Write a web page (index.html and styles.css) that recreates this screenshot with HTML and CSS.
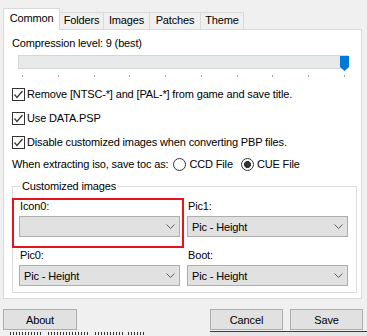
FILE: index.html
```html
<!DOCTYPE html>
<html lang="en">
<head>
  <meta charset="UTF-8">
  <title>Options</title>
  <link rel="stylesheet" href="styles.css">
</head>
<body>
<div class="dialog">
  <div class="tabs">
    <div class="tab active t-common">Common</div>
    <div class="tab t-folders">Folders</div>
    <div class="tab t-images">Images</div>
    <div class="tab t-patches">Patches</div>
    <div class="tab t-theme">Theme</div>
  </div>

  <div class="panel">
    <div class="caption">Compression level: 9 (best)</div>
    <div class="slider">
      <div class="track"></div>
      <svg class="thumb" width="9" height="15" viewBox="0 0 9 15"><path d="M0 0H9V11L4.5 15L0 11Z" fill="#0078d7"/></svg>
      <div class="ticks"><i></i><i></i><i></i><i></i><i></i><i></i><i></i><i></i><i></i><i></i></div>
    </div>

    <div class="check">
      <span class="box"><svg width="11" height="11" viewBox="0 0 11 11"><polyline points="1.5,5.5 4,8.5 9.5,2" fill="none" stroke="#333" stroke-width="1.2"/></svg></span>
      Remove [NTSC-*] and [PAL-*] from game and save title.
    </div>
    <div class="check">
      <span class="box"><svg width="11" height="11" viewBox="0 0 11 11"><polyline points="1.5,5.5 4,8.5 9.5,2" fill="none" stroke="#333" stroke-width="1.2"/></svg></span>
      Use DATA.PSP
    </div>
    <div class="check">
      <span class="box"><svg width="11" height="11" viewBox="0 0 11 11"><polyline points="1.5,5.5 4,8.5 9.5,2" fill="none" stroke="#333" stroke-width="1.2"/></svg></span>
      Disable customized images when converting PBP files.
    </div>

    <div class="radios">
      <span>When extracting iso, save toc as:</span>
      <span class="radio"></span><span>CCD File</span>
      <span class="radio on"></span><span>CUE File</span>
    </div>

    <fieldset class="group">
      <legend>Customized images</legend>
      <div class="grid">
        <div class="field">
          <div class="flabel">Icon0:</div>
          <div class="combo"><span></span><svg width="9" height="5" viewBox="0 0 9 5"><polyline points="0.5,0.5 4.5,4.5 8.5,0.5" fill="none" stroke="#606060"/></svg></div>
          <div class="highlight"></div>
        </div>
        <div class="field">
          <div class="flabel">Pic1:</div>
          <div class="combo"><span>Pic - Height</span><svg width="9" height="5" viewBox="0 0 9 5"><polyline points="0.5,0.5 4.5,4.5 8.5,0.5" fill="none" stroke="#606060"/></svg></div>
        </div>
        <div class="field">
          <div class="flabel">Pic0:</div>
          <div class="combo"><span>Pic - Height</span><svg width="9" height="5" viewBox="0 0 9 5"><polyline points="0.5,0.5 4.5,4.5 8.5,0.5" fill="none" stroke="#606060"/></svg></div>
        </div>
        <div class="field">
          <div class="flabel">Boot:</div>
          <div class="combo"><span>Pic - Height</span><svg width="9" height="5" viewBox="0 0 9 5"><polyline points="0.5,0.5 4.5,4.5 8.5,0.5" fill="none" stroke="#606060"/></svg></div>
        </div>
      </div>
    </fieldset>
  </div>

  <div class="buttons">
    <button class="btn about">About</button>
    <span class="spacer"></span>
    <button class="btn">Cancel</button>
    <button class="btn">Save</button>
  </div>
</div>

<!-- edge of the window behind -->
<div class="strip">
  <div class="strip-left">
    <i style="width:33px"></i><i style="width:42px"></i><i style="width:28px"></i><i style="width:17px"></i>
  </div>
  <div class="strip-right"></div>
</div>
</body>
</html>
```

FILE: styles.css
```css
* {
  box-sizing: border-box;
}
body {
  margin: 0;
  width: 367px;
  height: 336px;
  overflow: hidden;
  background: #f0f0f0;
  font-family: "Liberation Sans", Arial, sans-serif;
  font-size: 11px;
  letter-spacing: -0.15px;
  color: #000;
}
.dialog {
  padding: 8px 4px 0 3px;
}

/* tabs */
.tabs {
  display: flex;
  align-items: flex-end;
  height: 21px;
  position: relative;
  z-index: 1;
}
.tab {
  height: 17px;
  line-height: 15px;
  margin-left: -1px;
  border: 1px solid #d9d9d9;
  border-bottom: none;
  background: #f0f0f0;
  text-align: center;
}
.tab.active {
  height: 22px;
  line-height: 18px;
  margin-bottom: -1px;
  margin-left: 0;
  background: #fff;
  position: relative;
  z-index: 2;
}
.t-common { width: 57px; }
.t-folders { width: 45px; }
.t-images { width: 47px; }
.t-patches { width: 52px; }
.t-theme { width: 44px; }

.panel {
  width: 359px;
  height: 270px;
  border: 1px solid #d9d9d9;
  background: #fff;
  padding: 7px 4px 0 8px;
}
.caption {
  line-height: 13px;
}

/* trackbar */
.slider {
  position: relative;
  margin: 5px 9px 0 6px;
}
.track {
  height: 14px;
  background: #e7eaea;
  border: 1px solid #d6d6d6;
}
.thumb {
  position: absolute;
  top: 1px;
  right: -1px;
}
.ticks {
  display: flex;
  justify-content: space-between;
  height: 2px;
  margin: 6px 3px 0 4px;
}
.ticks i {
  width: 1px;
  height: 2px;
  background: #a0a0a0;
}

/* checkboxes and radios */
.check {
  display: flex;
  align-items: center;
  height: 13px;
  line-height: 13px;
  margin-top: 11px;
  white-space: nowrap;
}
.box {
  width: 13px;
  height: 13px;
  border: 1px solid #333;
  background: #fff;
  margin-right: 2px;
  flex: none;
}
.box svg {
  display: block;
}
.radios {
  display: flex;
  align-items: center;
  height: 13px;
  line-height: 13px;
  margin-top: 9px;
  white-space: nowrap;
}
.radio {
  width: 13px;
  height: 13px;
  border: 1px solid #333;
  border-radius: 50%;
  background: #fff;
  margin: 0 3px 0 5px;
  flex: none;
}
.radio.on {
  margin-left: 8px;
  background: radial-gradient(circle, #333 0 3.2px, #fff 3.8px);
}

/* group box */
.group {
  width: 345px;
  min-width: 0;
  margin: 9px 0 0 0;
  padding: 7px 8px 6px 6px;
  border: 1px solid #dcdcdc;
}
.group legend {
  padding: 0 2px;
  margin-left: 1px;
  line-height: 13px;
}
.grid {
  display: grid;
  grid-template-columns: 161px 161px;
  column-gap: 7px;
  row-gap: 12px;
}
.field {
  position: relative;
}
.flabel {
  line-height: 13px;
  padding-left: 1px;
}
.combo {
  display: flex;
  align-items: center;
  height: 21px;
  margin-top: 3px;
  padding: 0 4px 0 4px;
  background: #e1e1e1;
  border: 1px solid #adadad;
}
.combo span {
  flex: 1;
}
.highlight {
  position: absolute;
  left: -7px;
  top: -2px;
  width: 172px;
  height: 50px;
  border: 2px solid #e8121c;
}

/* buttons */
.buttons {
  display: flex;
  gap: 7px;
  margin-top: 10px;
}
.spacer {
  flex: 1;
}
.btn {
  width: 73px;
  height: 21px;
  padding: 0;
  background: #e1e1e1;
  border: 1px solid #adadad;
  font-family: "Liberation Sans", Arial, sans-serif;
  font-size: 11px;
  letter-spacing: -0.15px;
  color: #000;
}
.btn.about {
  width: 74px;
}

/* strip of the window below */
.strip {
  display: flex;
  height: 5px;
  margin-top: 1px;
}
.strip-left {
  width: 210px;
  display: flex;
  gap: 5px;
  padding: 1px 0 0 10px;
}
.strip-left i {
  height: 3px;
  background: repeating-linear-gradient(90deg, #333 0 1px, transparent 1px 3px);
}
.strip-right {
  flex: 1;
  border-top: 1px solid #3c3c3c;
  background: #e6e6e6;
}
```
